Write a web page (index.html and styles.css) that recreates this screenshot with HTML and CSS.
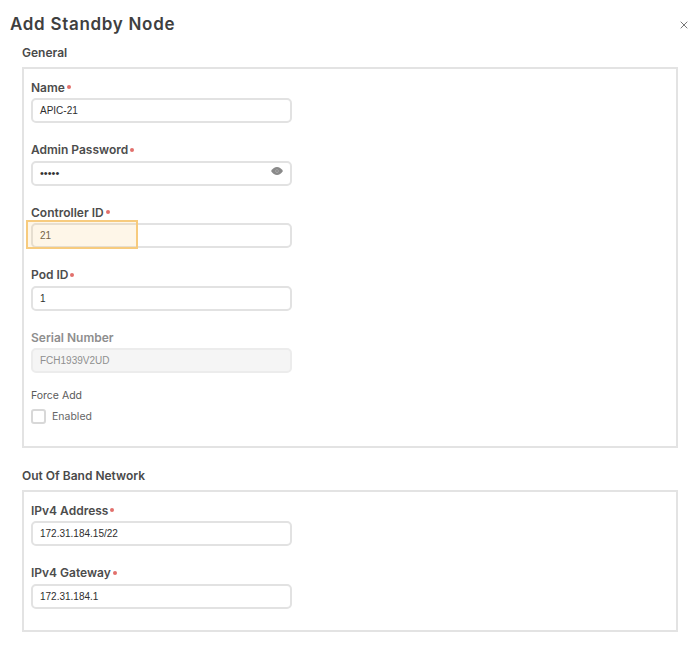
FILE: index.html
```html
<!DOCTYPE html>
<html lang="en">
<head>
<meta charset="utf-8">
<title>Add Standby Node</title>
<link rel="stylesheet" href="styles.css">
</head>
<body>
<main class="modal">
  <header class="modal-head">
    <h1>Add Standby Node</h1>
    <svg class="close" viewBox="0 0 8 8" width="8" height="8" aria-label="Close"><path d="M.7.7l6.6 6.6M7.3.7L.7 7.3"/></svg>
  </header>

  <h2 class="section-title first">General</h2>
  <section class="box box-general">
    <div class="field">
      <div class="label">Name<span class="req"></span></div>
      <div class="input">APIC-21</div>
    </div>
    <div class="field">
      <div class="label">Admin Password<span class="req"></span></div>
      <div class="input input-pass"><span class="dots">•••••</span>
        <svg class="eye" viewBox="0 0 12 8" width="12" height="8"><path d="M0 4C1.800 1.300 3.800 0 6 0s4.200 1.300 6 4c-1.800 2.700-3.800 4-6 4S1.800 6.700 0 4z" fill="#8a8a8a"/><circle cx="6" cy="4" r="1.500" fill="#c9c9c9"/><circle cx="6" cy="4" r=".9" fill="#777"/></svg>
      </div>
    </div>
    <div class="field">
      <div class="label">Controller ID<span class="req"></span></div>
      <div class="input input-marked">21<span class="highlight"></span></div>
    </div>
    <div class="field">
      <div class="label">Pod ID<span class="req"></span></div>
      <div class="input">1</div>
    </div>
    <div class="field">
      <div class="label label-off">Serial Number</div>
      <div class="input input-off">FCH1939V2UD</div>
    </div>
    <div class="force">
      <div class="force-title">Force Add</div>
      <div class="check-row"><span class="check"></span><span>Enabled</span></div>
    </div>
  </section>

  <h2 class="section-title second">Out Of Band Network</h2>
  <section class="box box-oob">
    <div class="field">
      <div class="label">IPv4 Address<span class="req"></span></div>
      <div class="input">172.31.184.15/22</div>
    </div>
    <div class="field">
      <div class="label">IPv4 Gateway<span class="req"></span></div>
      <div class="input">172.31.184.1</div>
    </div>
  </section>
</main>
</body>
</html>
```

FILE: styles.css
```css
* { box-sizing: border-box; }
html, body { margin: 0; padding: 0; background: #fff; }
body { width: 696px; height: 658px; overflow: hidden; font-family: Inter, "Liberation Sans", sans-serif; color: #444; }
.modal { padding: 13px 18px 0 22px; }
.modal-head { display: flex; justify-content: space-between; align-items: center; margin-left: -12px; height: 23px; }
h1 { margin: 0; font-size: 17px; line-height: 23px; font-weight: 600; letter-spacing: .7px; color: #3f3f3f; }
.close { fill: none; stroke: #777; stroke-width: 1; margin-right: -10px; margin-top: 1px; }
.section-title { margin: 0; font-size: 12px; line-height: 16px; font-weight: 600; color: #4a4a4a; }
.section-title.first { margin-top: 9px; }
.section-title.second { margin-top: 20px; }
.box { border: 2px solid #e3e3e3; padding: 10px 7px 0 7px; }
.box-general { margin-top: 6px; height: 381px; }
.box-oob { margin-top: 6px; height: 142px; }
.field { height: 62.500px; }
.label { display: flex; align-items: center; height: 16px; font-size: 12px; font-weight: 600; color: #4c4c4c; margin-bottom: 3px; }
.label-off { color: #8e8e8e; }
.req { width: 4px; height: 4px; border-radius: 50%; background: #e2706c; margin-left: 2px; }
.input { position: relative; display: flex; align-items: center; justify-content: space-between; width: 261px; height: 25px; padding: 0 7px; border: 2px solid #e2e2e2; border-radius: 5px; background: #fff; font-family: "Liberation Sans", Arial, sans-serif; font-size: 10px; color: #2e2e2e; }
.input-off { background: #f5f5f5; color: #8f8f8f; border-color: #ececec; }
.dots { font-size: 11px; letter-spacing: 0; color: #333; }
.eye { margin-right: 0; margin-top: -4px; }
.input-marked { color: #5a5040; }
.highlight { position: absolute; left: -7px; top: -5px; width: 112px; height: 29px; border: 2px solid #f7cb7e; background: rgba(250, 200, 120, .17); }
.force { margin-top: -3px; }
.force-title { font-size: 10.500px; line-height: 14px; color: #5a5a5a; }
.check-row { display: flex; align-items: center; gap: 6px; margin-top: 6px; font-size: 10.500px; color: #666; }
.check { width: 15px; height: 15px; border: 2px solid #d8d8d8; border-radius: 3px; background: #fff; }
```
